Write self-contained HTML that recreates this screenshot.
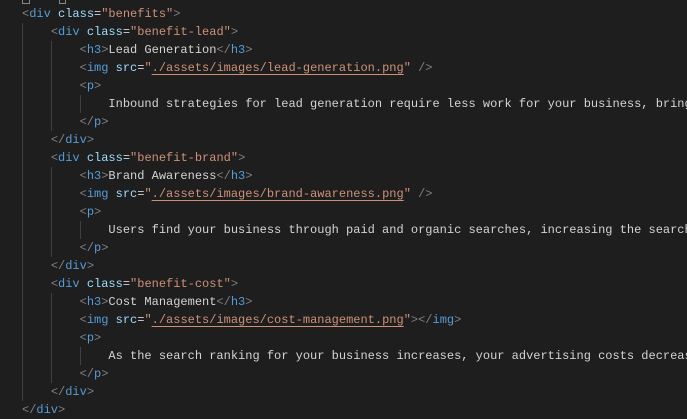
<!DOCTYPE html>
<html><head><style>
html,body{margin:0;padding:0;background:#1e1e1e;width:687px;height:419px;overflow:hidden}
.c{position:absolute;left:22px;top:5px;font:12px/18px "Liberation Mono",monospace;color:#d4d4d4}
.l{height:18px;white-space:pre}
.p{color:#808080}.t{color:#569cd6}.a{color:#9cdcfe}.s{color:#ce9178}.u{text-decoration:underline;text-underline-offset:3px}
.g{position:absolute;width:1px;background:#404040}
</style></head><body>
<div style="position:absolute;left:22px;top:-4px;width:6px;height:6px;border:1px solid #888"></div>
<div style="position:absolute;left:59px;top:-4px;width:5px;height:6px;border:1px solid #888"></div>
<div class="g" style="left:22px;top:23px;height:378px"></div>
<div class="g" style="left:51px;top:41px;height:90px"></div>
<div class="g" style="left:51px;top:167px;height:90px"></div>
<div class="g" style="left:51px;top:293px;height:90px"></div>
<div class="g" style="left:80px;top:95px;height:18px"></div>
<div class="g" style="left:80px;top:221px;height:18px"></div>
<div class="g" style="left:80px;top:347px;height:18px"></div>
<div class="c"><div class="l"><span class="p">&lt;</span><span class="t">div</span> <span class="a">class</span>=<span class="s">"benefits"</span><span class="p">&gt;</span></div><div class="l">    <span class="p">&lt;</span><span class="t">div</span> <span class="a">class</span>=<span class="s">"benefit-lead"</span><span class="p">&gt;</span></div><div class="l">        <span class="p">&lt;</span><span class="t">h3</span><span class="p">&gt;</span>Lead Generation<span class="p">&lt;/</span><span class="t">h3</span><span class="p">&gt;</span></div><div class="l">        <span class="p">&lt;</span><span class="t">img</span> <span class="a">src</span>=<span class="s">"<span class="u">./assets/images/lead-generation.png</span>"</span> <span class="p">/&gt;</span></div><div class="l">        <span class="p">&lt;</span><span class="t">p</span><span class="p">&gt;</span></div><div class="l">            Inbound strategies for lead generation require less work for your business, bringing</div><div class="l">        <span class="p">&lt;/</span><span class="t">p</span><span class="p">&gt;</span></div><div class="l">    <span class="p">&lt;/</span><span class="t">div</span><span class="p">&gt;</span></div><div class="l">    <span class="p">&lt;</span><span class="t">div</span> <span class="a">class</span>=<span class="s">"benefit-brand"</span><span class="p">&gt;</span></div><div class="l">        <span class="p">&lt;</span><span class="t">h3</span><span class="p">&gt;</span>Brand Awareness<span class="p">&lt;/</span><span class="t">h3</span><span class="p">&gt;</span></div><div class="l">        <span class="p">&lt;</span><span class="t">img</span> <span class="a">src</span>=<span class="s">"<span class="u">./assets/images/brand-awareness.png</span>"</span> <span class="p">/&gt;</span></div><div class="l">        <span class="p">&lt;</span><span class="t">p</span><span class="p">&gt;</span></div><div class="l">            Users find your business through paid and organic searches, increasing the search</div><div class="l">        <span class="p">&lt;/</span><span class="t">p</span><span class="p">&gt;</span></div><div class="l">    <span class="p">&lt;/</span><span class="t">div</span><span class="p">&gt;</span></div><div class="l">    <span class="p">&lt;</span><span class="t">div</span> <span class="a">class</span>=<span class="s">"benefit-cost"</span><span class="p">&gt;</span></div><div class="l">        <span class="p">&lt;</span><span class="t">h3</span><span class="p">&gt;</span>Cost Management<span class="p">&lt;/</span><span class="t">h3</span><span class="p">&gt;</span></div><div class="l">        <span class="p">&lt;</span><span class="t">img</span> <span class="a">src</span>=<span class="s">"<span class="u">./assets/images/cost-management.png</span>"</span><span class="p">&gt;&lt;/</span><span class="t">img</span><span class="p">&gt;</span></div><div class="l">        <span class="p">&lt;</span><span class="t">p</span><span class="p">&gt;</span></div><div class="l">            As the search ranking for your business increases, your advertising costs decrease</div><div class="l">        <span class="p">&lt;/</span><span class="t">p</span><span class="p">&gt;</span></div><div class="l">    <span class="p">&lt;/</span><span class="t">div</span><span class="p">&gt;</span></div><div class="l"><span class="p">&lt;/</span><span class="t">div</span><span class="p">&gt;</span></div></div>
</body></html>
